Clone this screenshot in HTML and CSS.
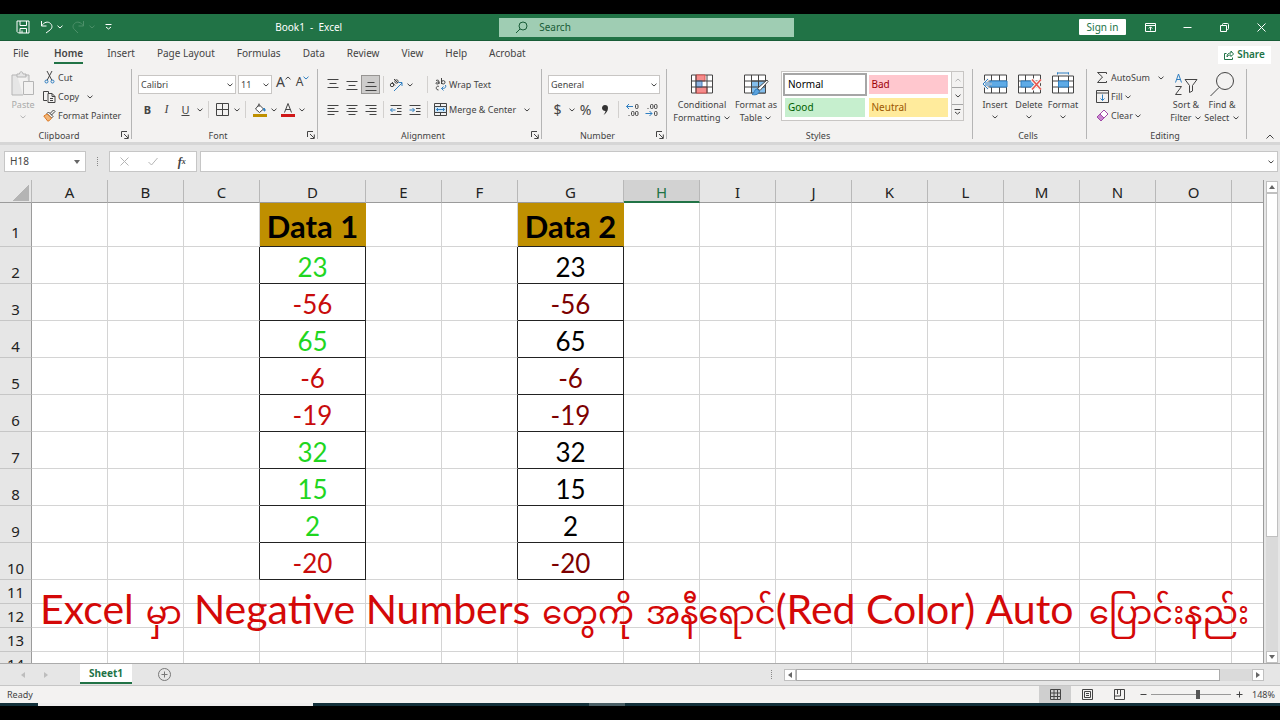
FILE: index.html
```html
<!DOCTYPE html>
<html lang="en">
<head>
    <meta charset="UTF-8">
    <meta name="viewport" content="width=device-width, initial-scale=1.0">
    <title>Book1 - Excel</title>
    <link rel="stylesheet" href="styles.css">
</head>
<body>
    <svg class="defs" aria-hidden="true">
        <symbol id="chev" viewBox="0 0 6 4"><path d="M.5.7 3 3 5.5.7"/></symbol>
        <symbol id="launch" viewBox="0 0 8 8"><path d="M.5 6V.5H6M3 3l4 4M7.3 3.5v4h-4"/></symbol>
    </svg>

    <header class="titlebar">
        <div class="title-left">
            <div class="quick">
                <button aria-label="Save"><svg width="14" height="14" viewBox="0 0 14 14"><path d="M1 1h12v12H2.5L1 11.500zM4 1v4.500h6.500V1M4 13V8.500h6.500V13M6 13v-2.500"/></svg></button>
                <button aria-label="Undo"><svg width="13" height="14" viewBox="0 0 13 14"><path d="M1.500 1v5h5M1.700 5.800C4 2 8 1 10.500 3.500s1.500 5-.5 6.500L6 13"/></svg></button>
                <button aria-label="Undo list"><svg class="chev"><use href="#chev"/></svg></button>
                <button class="faded" aria-label="Redo"><svg width="13" height="14" viewBox="0 0 13 14"><path d="M11.500 1v5h-5M11.300 5.800C9 2 5 1 2.500 3.500s-1.500 5 .5 6.500l3 3"/></svg></button>
                <button class="faded" aria-label="Redo list"><svg class="chev"><use href="#chev"/></svg></button>
                <button class="customize" aria-label="Customize toolbar"><svg width="7" height="6" viewBox="0 0 7 6"><path d="M.5.5h6M1 3l2.500 2L6 3"/></svg></button>
            </div>
            <span class="doc-title">Book1&nbsp; -&nbsp; Excel</span>
        </div>
        <label class="search">
            <svg width="13" height="13" viewBox="0 0 13 13"><circle cx="8" cy="5" r="4"/><path d="M5 8l-4 4"/></svg>
            <input type="text" placeholder="Search" aria-label="Search">
        </label>
        <div class="window-tools">
            <button class="signin">Sign in</button>
            <button class="wbtn" aria-label="Ribbon display"><svg width="11" height="9" viewBox="0 0 11 9"><path d="M.5.5h10v8H.5zM.5 2.500h10M5.500 7.500V4M3.800 5.500l1.700-1.700 1.700 1.700"/></svg></button>
            <button class="wbtn" aria-label="Minimize"><svg width="9" height="9" viewBox="0 0 9 9"><path d="M.5 4.500h8"/></svg></button>
            <button class="wbtn" aria-label="Restore"><svg width="9" height="9" viewBox="0 0 9 9"><path d="M.5 2.500h6v6h-6zM2.500 2.500v-1q0-1 1-1h4q1 0 1 1v4q0 1-1 1h-1"/></svg></button>
            <button class="wbtn" aria-label="Close"><svg width="9" height="9" viewBox="0 0 9 9"><path d="M.5.5l8 8M8.500.5l-8 8"/></svg></button>
        </div>
    </header>

    <nav class="tabs">
        <a href="#">File</a>
        <a href="#" class="active">Home</a>
        <a href="#">Insert</a>
        <a href="#">Page Layout</a>
        <a href="#">Formulas</a>
        <a href="#">Data</a>
        <a href="#">Review</a>
        <a href="#">View</a>
        <a href="#">Help</a>
        <a href="#">Acrobat</a>
        <button class="share"><svg width="10" height="10" viewBox="0 0 10 10"><path d="M2.500 3.500h-2v6h8v-2M3 7c0-3 1.500-4 4-4V1l2.500 3L7 6.500V5C5 5 4 5.500 3 7z"/></svg>Share</button>
    </nav>

    <section class="ribbon">
        <div class="group g-clipboard">
            <div class="tools">
                <button class="big faded">
                    <svg width="24" height="27" viewBox="0 0 24 27"><path d="M6 4H1v20h11M14 4h4v7M6 6V3h2.500C8.500 0 12 0 12 3h3v3z" fill="#e6e6e6"/><path d="M12.500 10.500h10v13h-10z" fill="#f3f2f1"/></svg>
                    <span>Paste</span>
                    <svg class="chev"><use href="#chev"/></svg>
                </button>
                <div class="stack">
                    <button><svg width="13" height="13" viewBox="0 0 13 13"><path d="M4 0l5 9.500M9 0L4 9.500"/><g stroke="#2f7fc1"><circle cx="3.500" cy="10.500" r="1.500"/><circle cx="9.500" cy="10.500" r="1.500"/></g></svg>Cut</button>
                    <button><svg width="13" height="13" viewBox="0 0 13 13"><path d="M4 10.500H.5V1.500h5V3M5 3.500h4l3 3v6H5zM9 3.500v3h3M7 8.500h3M7 10.500h3"/></svg>Copy<svg class="chev far"><use href="#chev"/></svg></button>
                    <button><svg width="13" height="13" viewBox="0 0 13 13"><path d="M7 4.500L10.500 1 12 2.500 8.500 6z"/><path d="M5.500 3l4.500 4.500-1.500 1.500L4 4.500z" fill="#fff"/><path d="M4 5L.8 7l4 5.200C7 11.500 8 10 8.500 9z" fill="#f2b577" stroke="#dd7a24"/></svg>Format Painter</button>
                </div>
            </div>
            <div class="caption"><span>Clipboard</span><button aria-label="Clipboard options"><svg class="launch"><use href="#launch"/></svg></button></div>
        </div>

        <div class="group g-font">
            <div class="rows">
                <div class="row">
                    <label class="combo combo-font"><select aria-label="Font"><option>Calibri</option></select><svg class="chev"><use href="#chev"/></svg></label>
                    <label class="combo combo-size"><select aria-label="Font size"><option>11</option></select><svg class="chev"><use href="#chev"/></svg></label>
                    <button class="ic fsize" aria-label="Increase font size"><span class="grow">A</span><svg class="chev up"><use href="#chev"/></svg></button>
                    <button class="ic fsize" aria-label="Decrease font size"><span>A</span><svg class="chev up blue"><use href="#chev"/></svg></button>
                </div>
                <div class="row">
                    <button class="ic bold">B</button>
                    <button class="ic italic">I</button>
                    <button class="ic under">U</button>
                    <button class="drop" aria-label="Underline style"><svg class="chev"><use href="#chev"/></svg></button>
                    <i class="sep"></i>
                    <button class="ic" aria-label="Borders"><svg width="13" height="13" viewBox="0 0 13 13"><path d="M.5.5h12v12H.5zM6.500.5v12M.5 6.500h12"/></svg></button>
                    <button class="drop" aria-label="Border style"><svg class="chev"><use href="#chev"/></svg></button>
                    <i class="sep"></i>
                    <button class="ic" aria-label="Fill color"><svg width="14" height="14" viewBox="0 0 14 14"><path d="M6 1.500l4.500 4.500L6.500 9.500 2.500 6z" fill="#fff"/><path d="M6 4V.5"/><path d="M11 5c1.500 1.500 1.500 3 .5 3S10.500 6.500 11 5z" fill="#2f7fc1" stroke="#2f7fc1"/><path d="M0 11h14v3H0z" fill="#bf9000" stroke="none"/></svg></button>
                    <button class="drop" aria-label="More fill colors"><svg class="chev"><use href="#chev"/></svg></button>
                    <button class="ic" aria-label="Font color"><svg width="14" height="14" viewBox="0 0 14 14"><path d="M3.500 9.500l3.500-9 3.500 9M4.600 6.500h4.800"/><path d="M0 11h14v3H0z" fill="#d01818" stroke="none"/></svg></button>
                    <button class="drop" aria-label="More font colors"><svg class="chev"><use href="#chev"/></svg></button>
                </div>
            </div>
            <div class="caption"><span>Font</span><button aria-label="Font options"><svg class="launch"><use href="#launch"/></svg></button></div>
        </div>

        <div class="group g-align">
            <div class="rows">
                <div class="row">
                    <button class="ic" aria-label="Top align"><svg width="12" height="12" viewBox="0 0 12 12"><path d="M.5.5h11M2.500 4.500h7M.5 8.500h11"/></svg></button>
                    <button class="ic" aria-label="Middle align"><svg width="12" height="12" viewBox="0 0 12 12"><path d="M.5 2.500h11M2.500 6.500h7M.5 10.500h11"/></svg></button>
                    <button class="ic pressed" aria-label="Bottom align"><svg width="12" height="12" viewBox="0 0 12 12"><path d="M2.500 3.500h7M.5 7.500h11M.5 11.500h11"/></svg></button>
                    <i class="sep"></i>
                    <button class="ic" aria-label="Orientation"><svg width="14" height="14" viewBox="0 0 14 14"><circle cx="3" cy="7" r="1.700"/><path d="M3 4l3 3.500M5 1l4 4"/><circle cx="7.500" cy="3.500" r="1.700"/><path d="M5 13l8-8M9.500 4.500H13V8" stroke="#2f7fc1"/></svg></button>
                    <button class="drop" aria-label="More orientations"><svg class="chev"><use href="#chev"/></svg></button>
                    <i class="sep second"></i>
                    <button class="wide"><svg width="13" height="13" viewBox="0 0 13 13"><path d="M2 2.500c3-1 3 0 3 3.500M5 4c-3-.5-4 2-2 2s2-1 2-2M7.500 0v6"/><circle cx="9.300" cy="4.300" r="1.700"/><path d="M5 8.500c-3-1.500-4 3.500-.5 3.500"/><path d="M11.500 7c1 3-1 3.500-4 3.500M9.500 8.500l-2 2 2 2" stroke="#2f7fc1"/></svg>Wrap Text</button>
                </div>
                <div class="row">
                    <button class="ic" aria-label="Align left"><svg width="12" height="12" viewBox="0 0 12 12"><path d="M.5 1.500h11M.5 4.500h7M.5 7.500h11M.5 10.500h7"/></svg></button>
                    <button class="ic" aria-label="Center"><svg width="12" height="12" viewBox="0 0 12 12"><path d="M.5 1.500h11M2.500 4.500h7M.5 7.500h11M2.500 10.500h7"/></svg></button>
                    <button class="ic" aria-label="Align right"><svg width="12" height="12" viewBox="0 0 12 12"><path d="M.5 1.500h11M4.500 4.500h7M.5 7.500h11M4.500 10.500h7"/></svg></button>
                    <i class="sep"></i>
                    <button class="ic" aria-label="Decrease indent"><svg width="12" height="12" viewBox="0 0 12 12"><path d="M.5 1.500h11M7 4.500h4.500M7 7.500h4.500M.5 10.500h11"/><path d="M5.500 6h-5M2.500 4l-2 2 2 2" stroke="#2f7fc1"/></svg></button>
                    <button class="ic" aria-label="Increase indent"><svg width="12" height="12" viewBox="0 0 12 12"><path d="M.5 1.500h11M7 4.500h4.500M7 7.500h4.500M.5 10.500h11"/><path d="M.5 6h5M3.500 4l2 2-2 2" stroke="#2f7fc1"/></svg></button>
                    <i class="sep"></i>
                    <button class="wide"><svg width="13" height="13" viewBox="0 0 13 13"><path d="M.5.5h12v12H.5zM6.500.5v3M6.500 10v2.500"/><path d="M.5 3.500h12v6H.5z" fill="#cfe6f7"/><path d="M2.500 6.500h8M4 5L2.500 6.500 4 8M9 5l1.500 1.500L9 8" stroke="#2f7fc1"/></svg>Merge &amp; Center<svg class="chev far"><use href="#chev"/></svg></button>
                </div>
            </div>
            <div class="caption"><span>Alignment</span><button aria-label="Alignment options"><svg class="launch"><use href="#launch"/></svg></button></div>
        </div>

        <div class="group g-number">
            <div class="rows">
                <div class="row">
                    <label class="combo combo-number"><select aria-label="Number format"><option>General</option></select><svg class="chev"><use href="#chev"/></svg></label>
                </div>
                <div class="row">
                    <button class="ic glyph">$</button>
                    <button class="drop" aria-label="Currency"><svg class="chev"><use href="#chev"/></svg></button>
                    <button class="ic glyph">%</button>
                    <button class="ic" aria-label="Comma style"><svg width="8" height="12" viewBox="0 0 8 12"><path d="M4 1c2 0 3 1 3 3 0 3-2 5.500-4.500 7 1-1.500 2-3 2-4C2 7 1 5.500 1 4s1-3 3-3z" fill="#333" stroke="none"/></svg></button>
                    <i class="sep"></i>
                    <button class="ic dec" aria-label="Increase decimal"><svg width="13" height="14" viewBox="0 0 13 14"><rect x="9.500" y="1.500" width="2.500" height="4" rx="1"/><rect x="9.500" y="8.500" width="2.500" height="4" rx="1"/><rect x="5.500" y="8.500" width="2.500" height="4" rx="1"/><path d="M3 12v1"/><path d="M7 3.500H.5M3 1L.5 3.500 3 6" stroke="#2f7fc1"/></svg></button>
                    <button class="ic dec" aria-label="Decrease decimal"><svg width="13" height="14" viewBox="0 0 13 14"><rect x="9.500" y="1.500" width="2.500" height="4" rx="1"/><rect x="5.500" y="1.500" width="2.500" height="4" rx="1"/><rect x="9.500" y="8.500" width="2.500" height="4" rx="1"/><path d="M3 5v1"/><path d="M.5 10.500H7M4.500 8L7 10.500 4.500 13" stroke="#2f7fc1"/></svg></button>
                </div>
            </div>
            <div class="caption"><span>Number</span><button aria-label="Number options"><svg class="launch"><use href="#launch"/></svg></button></div>
        </div>

        <div class="group g-styles">
            <div class="tools">
                <button class="big roomy">
                    <svg width="24" height="24" viewBox="0 0 24 24"><path d="M1.500 2.500h21v18h-21z" fill="#fff"/><path d="M6 2.500h9v6H6zM6 14.500h11v6H6z" fill="#f58c8c" stroke="#d9534f"/><path d="M6 8.500h6v6H6z" fill="#8fb4e3" stroke="#4a7ebb"/><path d="M1.500 8.500h21M1.500 14.500h21M6 2.500v18M17 2.500v18"/></svg>
                    <span>Conditional<br>Formatting <svg class="chev"><use href="#chev"/></svg></span>
                </button>
                <button class="big">
                    <svg width="26" height="24" viewBox="0 0 26 24"><path d="M1.500 2.500h21v18h-21z" fill="#fff"/><path d="M8.500 8.500h14v12h-14z" fill="#83beec"/><path d="M1.500 8.500h21M1.500 14.500h21M8.500 2.500v18M15.500 2.500v18"/><path d="M24 7.500L14.500 16l2.500 2L25 9z" fill="#fff"/><path d="M14 16.500c-3 0-2 4-5 5.500 4 1 7-.5 7.500-3.500z" fill="#5ba3dd" stroke="#2f7fc1"/></svg>
                    <span>Format as<br>Table <svg class="chev"><use href="#chev"/></svg></span>
                </button>
                <div class="gallery">
                    <div class="swatches">
                        <button class="swatch normal">Normal</button>
                        <button class="swatch bad">Bad</button>
                        <button class="swatch good">Good</button>
                        <button class="swatch neutral">Neutral</button>
                    </div>
                    <div class="spin">
                        <button class="faded" aria-label="Previous styles"><svg class="chev flip"><use href="#chev"/></svg></button>
                        <button aria-label="Next styles"><svg class="chev"><use href="#chev"/></svg></button>
                        <button aria-label="All styles"><svg width="7" height="6" viewBox="0 0 7 6"><path d="M.5.5h6M1 3l2.500 2L6 3"/></svg></button>
                    </div>
                </div>
            </div>
            <div class="caption"><span>Styles</span></div>
        </div>

        <div class="group g-cells">
            <div class="tools">
                <button class="big">
                    <svg width="26" height="24" viewBox="0 0 26 24"><path d="M2.500 2.500h22v18h-22zM2.500 8.500h22M2.500 14.500h22M9.500 2.500v18M17.500 2.500v18" fill="#fff"/><path d="M8 8.500h17v6H8z" fill="#5fabe6" stroke="#2f7fc1"/><path d="M10 11.500H2M6.500 6l-5.500 5.500L6.500 17" stroke="#f3f2f1" stroke-width="3"/><path d="M10 10.500H3M10 12.500H3M6 6.500l-5 5 5 5" stroke="#2f7fc1"/></svg>
                    <span>Insert</span><svg class="chev"><use href="#chev"/></svg>
                </button>
                <button class="big">
                    <svg width="26" height="24" viewBox="0 0 26 24"><path d="M2.500 2.500h22v18h-22zM2.500 8.500h22M2.500 14.500h22M9.500 2.500v18M17.500 2.500v18" fill="#fff"/><path d="M5 8.500h12v6H5z" fill="#5fabe6" stroke="#2f7fc1"/><path d="M16 7l9 10M25 7l-9 10" stroke="#f3f2f1" stroke-width="4"/><path d="M16 7l9 10M25 7l-9 10" stroke="#e8554e" stroke-width="1.500"/></svg>
                    <span>Delete</span><svg class="chev"><use href="#chev"/></svg>
                </button>
                <button class="big">
                    <svg width="26" height="24" viewBox="0 0 26 24"><path d="M2.500 3.500h21v17h-21zM2.500 8.500h21M2.500 14.500h21M8.500 3.500v17M18.500 3.500v17" fill="#fff"/><path d="M8.500 8.500h10v6h-10z" fill="#5fabe6" stroke="#2f7fc1"/><path d="M7 .5h12M7.500 0v2M18.500 0v2" stroke="#2f7fc1"/></svg>
                    <span>Format</span><svg class="chev"><use href="#chev"/></svg>
                </button>
            </div>
            <div class="caption"><span>Cells</span></div>
        </div>

        <div class="group g-editing">
            <div class="tools">
                <div class="stack">
                    <button><svg width="13" height="13" viewBox="0 0 13 13"><path d="M10.500 3V1.500H1.500L6.500 6l-5 5.500h9V10"/></svg>AutoSum<svg class="chev far"><use href="#chev"/></svg></button>
                    <button><svg width="13" height="13" viewBox="0 0 13 13"><path d="M.5.500h12v12H.5zM.5 3h12"/><path d="M6.500 4.500v6M4.500 8.500l2 2 2-2" stroke="#2f7fc1"/></svg>Fill<svg class="chev"><use href="#chev"/></svg></button>
                    <button><svg width="13" height="13" viewBox="0 0 13 13"><path d="M1 8l7-7 4 4-7 7z" fill="#fff" stroke="#a04aa8"/><path d="M1 8l3-3 4 4-3 3z" fill="#c986cf" stroke="#a04aa8"/></svg>Clear<svg class="chev"><use href="#chev"/></svg></button>
                </div>
                <button class="big">
                    <svg width="24" height="25" viewBox="0 0 24 25"><path d="M1.500 10.500L4.500 2l3 8.500M2.500 7.500h4" stroke="#2f7fc1"/><path d="M1.500 14.500h6l-6 8h6M11 7.500h12l-4.500 6v5.500l-3 1.500v-7z"/></svg>
                    <span>Sort &amp;<br>Filter <svg class="chev"><use href="#chev"/></svg></span>
                </button>
                <button class="big">
                    <svg width="24" height="25" viewBox="0 0 24 25"><circle cx="15" cy="9" r="8.500"/><path d="M9 15.500L.5 24"/></svg>
                    <span>Find &amp;<br>Select <svg class="chev"><use href="#chev"/></svg></span>
                </button>
            </div>
            <div class="caption"><span>Editing</span></div>
        </div>
        <button class="collapse" aria-label="Collapse ribbon"><svg width="8" height="5" viewBox="0 0 8 5"><path d="M.5 4.500L4 1l3.500 3.500"/></svg></button>
    </section>

    <section class="formula-bar">
        <label class="name-box"><input type="text" value="H18" aria-label="Name box"><svg width="6" height="4" viewBox="0 0 6 4"><path d="M0 0h6L3 4z"/></svg></label>
        <i class="grip"></i>
        <div class="fx">
            <button class="faded" aria-label="Cancel"><svg width="9" height="9" viewBox="0 0 9 9"><path d="M.5.5l8 8M8.500.5l-8 8"/></svg></button>
            <button class="faded" aria-label="Enter"><svg width="10" height="9" viewBox="0 0 10 9"><path d="M.5 5L3.500 8l6-7"/></svg></button>
            <button class="fn" aria-label="Insert function">f<sub>x</sub></button>
        </div>
        <label class="formula"><input type="text" aria-label="Formula"><svg class="chev"><use href="#chev"/></svg></label>
    </section>

    <main class="sheet">
        <div class="grid-area">
            <table class="grid">
                <colgroup id="cols"></colgroup>
                <thead><tr id="letters"></tr></thead>
                <tbody id="cells"></tbody>
            </table>
            <p class="banner" lang="my">
                <span>Excel</span>
                <span class="my">မှာ</span>
                <span>Negative Numbers</span>
                <span class="my">တွေကို</span>
                <span><span class="my">အနီရောင်</span>(Red Color) Auto</span>
                <span class="my">ပြောင်းနည်း</span>
            </p>
        </div>
        <div class="vscroll">
            <button aria-label="Scroll up"><svg width="6" height="4" viewBox="0 0 6 4"><path d="M0 4h6L3 0z"/></svg></button>
            <div class="vtrack"><div class="vthumb"></div></div>
            <button aria-label="Scroll down"><svg width="6" height="4" viewBox="0 0 6 4"><path d="M0 0h6L3 4z"/></svg></button>
        </div>
    </main>

    <div class="sheet-tabs">
        <div class="sheet-nav">
            <button aria-label="Previous sheet"><svg width="4" height="6" viewBox="0 0 4 6"><path d="M4 0v6L0 3z"/></svg></button>
            <button aria-label="Next sheet"><svg width="4" height="6" viewBox="0 0 4 6"><path d="M0 0v6l4-3z"/></svg></button>
        </div>
        <button class="sheet-tab">Sheet1</button>
        <button class="add" aria-label="New sheet"><svg width="13" height="13" viewBox="0 0 13 13"><circle cx="6.500" cy="6.500" r="6"/><path d="M6.500 3.500v6M3.500 6.500h6"/></svg></button>
        <i class="grip"></i>
        <div class="hscroll">
            <button aria-label="Scroll left"><svg width="4" height="6" viewBox="0 0 4 6"><path d="M4 0v6L0 3z"/></svg></button>
            <div class="htrack"><div class="hthumb"></div></div>
            <button aria-label="Scroll right"><svg width="4" height="6" viewBox="0 0 4 6"><path d="M0 0v6l4-3z"/></svg></button>
        </div>
    </div>

    <footer class="status">
        <span class="ready">Ready</span>
        <button class="view on" aria-label="Normal view"><svg width="11" height="11" viewBox="0 0 11 11"><path d="M.5.5h10v10H.5zM4 .5v10M7.500.5v10M.5 4h10M.5 7.500h10"/></svg></button>
        <button class="view" aria-label="Page layout view"><svg width="11" height="11" viewBox="0 0 11 11"><path d="M.5.5h10v10H.5zM2.500 2.500h6v6h-6zM4 4.500h3M4 6.500h3"/></svg></button>
        <button class="view" aria-label="Page break view"><svg width="11" height="11" viewBox="0 0 11 11"><path d="M.5.5h10v10H.5zM.5 7h6V.500M3.500.5V5"/></svg></button>
        <button class="step" aria-label="Zoom out"><svg width="7" height="7" viewBox="0 0 7 7"><path d="M.5 3.500h6"/></svg></button>
        <input class="zoom" type="range" min="0" max="100" value="59" aria-label="Zoom">
        <button class="step" aria-label="Zoom in"><svg width="7" height="7" viewBox="0 0 7 7"><path d="M.5 3.500h6M3.500.5v6"/></svg></button>
        <span class="percent">148%</span>
    </footer>
    <div class="taskbar"><div class="task"></div><div class="task dim"></div></div>

    <script src="script.js"></script>
</body>
</html>
```
FILE: styles.css
```css
* {
    box-sizing: border-box;
}
body {
    margin: 0;
    padding: 14px 0;
    height: 100vh;
    display: flex;
    flex-direction: column;
    overflow: hidden;
    background: #000;
    color: #444;
    font: 9px/13px "Noto Sans", "Open Sans", sans-serif;
}
button, input, select {
    font: inherit;
    color: inherit;
    border: 0;
    padding: 0;
    margin: 0;
    background: none;
    border-radius: 0;
}
button {
    display: flex;
    align-items: center;
    justify-content: center;
    white-space: nowrap;
}
svg {
    fill: none;
    stroke: #444;
    flex: none;
}
.defs {
    position: absolute;
    width: 0;
    height: 0;
}
.chev {
    width: 6px;
    height: 4px;
}
.launch {
    width: 8px;
    height: 8px;
}
.flip {
    transform: rotate(180deg);
}
.faded {
    color: #aaa;
}
.faded svg {
    stroke: #b5b5b5;
}

/* title bar */
.titlebar {
    display: flex;
    align-items: center;
    flex: none;
    height: 27px;
    background: #217346;
    border-bottom: 1px solid #185c37;
    color: #fff;
}
.titlebar svg {
    stroke: #fff;
}
.title-left {
    flex: 0 0 39%;
    display: flex;
    align-items: center;
}
.quick {
    display: flex;
    align-items: center;
    padding-left: 16px;
}
.quick button {
    margin-right: 4px;
}
.quick button:first-child {
    margin-right: 10px;
}
.quick button:nth-child(3) {
    margin-right: 9px;
}
.quick .faded svg {
    stroke: #4c9069;
}
.quick .customize {
    margin-left: 6px;
}
.doc-title {
    margin-left: auto;
    margin-right: 157px;
    font-size: 10px;
}
.search {
    flex: 0 0 23%;
    height: 19px;
    display: flex;
    align-items: center;
    padding-left: 16px;
    gap: 11px;
    background: #9fcdb3;
    color: #185c37;
}
.titlebar .search svg {
    stroke: #185c37;
}
.search input {
    flex: 1;
    min-width: 0;
    font-size: 10px;
}
.search input::placeholder {
    color: #185c37;
    opacity: 1;
}
.window-tools {
    flex: 1;
    display: flex;
    justify-content: flex-end;
    align-items: center;
}
.signin {
    width: 47px;
    height: 16px;
    margin-right: 6px;
    background: #fff;
    color: #217346;
    font-size: 10px;
    border-radius: 1px;
}
.wbtn {
    width: 37px;
    height: 26px;
}

/* ribbon tabs */
.tabs {
    display: flex;
    align-items: center;
    flex: none;
    height: 27px;
    gap: 22px;
    padding: 0 9px 0 13px;
    background: #f3f2f1;
    font-size: 10px;
}
.tabs a {
    color: #444;
    text-decoration: none;
    padding: 2px 0;
    border-bottom: 2px solid transparent;
}
.tabs a:first-child {
    margin-right: 3px;
}
.tabs .active {
    margin-right: 2px;
    font-weight: 600;
    border-color: #217346;
}
.share {
    margin-left: auto;
    width: 53px;
    height: 18px;
    gap: 3px;
    background: #fff;
    color: #217346;
    font-weight: 600;
}
.share svg {
    stroke: #217346;
}

/* ribbon */
.ribbon {
    display: flex;
    flex: none;
    height: 77px;
    padding-top: 1px;
    background: #f3f2f1;
    border-bottom: 3px solid #d6d6d6;
}
.group {
    display: flex;
    flex-direction: column;
    height: 70px;
    border-right: 1px solid #b5b5b5;
}
.tools, .rows {
    height: 60px;
    flex: none;
}
.tools {
    display: flex;
}
.caption {
    display: flex;
    align-items: center;
    height: 12px;
}
.caption span {
    flex: 1;
    text-align: center;
    padding-right: 3px;
}
.caption button {
    margin-right: 2px;
}
.big {
    flex-direction: column;
    justify-content: flex-start;
    padding-top: 2px;
}
.big > svg:first-child {
    height: 27px;
}
.big .chev {
    margin: 4px 0;
}
.big span .chev {
    margin: 1px;
}
.stack {
    display: flex;
    flex-direction: column;
    gap: 6px;
    padding-top: 2px;
}
.stack button {
    justify-content: flex-start;
    height: 13px;
    gap: 2px;
}
.far {
    margin-left: 6px;
}
.rows {
    display: flex;
    flex-direction: column;
    gap: 6px;
    padding-top: 6px;
}
.row {
    display: flex;
    align-items: center;
    height: 19px;
}
.ic {
    width: 19px;
    height: 19px;
}
.drop {
    width: 9px;
    height: 19px;
}
.sep {
    width: 1px;
    height: 17px;
    margin: 0 4px;
    background: #d2d0ce;
}
.combo {
    position: relative;
    height: 19px;
    margin-right: 2px;
}
.combo select {
    appearance: none;
    width: 100%;
    height: 100%;
    padding-left: 2px;
    background: #fff;
    border: 1px solid #c8c6c4;
}
.combo .chev {
    position: absolute;
    right: 3px;
    top: 8px;
}
.pressed {
    background: #cdcccb;
    border: 1px solid #979593;
}
.g-clipboard { width: 132px; }
.g-clipboard .big { width: 43px; padding-left: 3px; }
.g-font { width: 186px; }
.g-font .rows { padding-left: 6px; }
.combo-font { width: 98px; }
.combo-size { width: 34px; }
.fsize {
    font-size: 12px;
    align-items: flex-start;
}
.fsize .grow {
    font-size: 14px;
}
.fsize .up {
    margin-top: 1px;
    transform: rotate(180deg);
}
.fsize .blue {
    transform: none;
    stroke: #2f7fc1;
}
.bold {
    font-size: 11px;
    font-weight: bold;
}
.italic {
    font: italic 12px "Liberation Serif", serif;
}
.under {
    font-size: 11px;
    text-decoration: underline;
}
.g-align { width: 224px; }
.g-align .rows { padding-left: 5px; }
.g-align .sep { margin: 0 2px 0 3px; }
.g-align .second { margin-left: 13px; }
.wide {
    gap: 2px;
    margin-left: 4px;
}
.g-number { width: 125px; }
.g-number .rows { padding-left: 6px; }
.combo-number { width: 112px; }
.glyph {
    font-size: 14px;
}
.g-styles { width: 306px; }
.g-styles .big { width: 48px; }
.g-styles .roomy { width: 65px; padding-left: 5px; }
.gallery {
    flex: 1;
    display: flex;
    height: 50px;
    margin: 2px 8px 0 1px;
    border: 1px solid #c8c6c4;
    background: #fff;
}
.swatches {
    flex: 1;
    display: grid;
    grid-template-columns: 1fr 1fr;
    gap: 4px;
    padding: 3px;
}
.swatch {
    justify-content: flex-start;
    padding-left: 3px;
    font-size: 10px;
}
.normal {
    color: #000;
    outline: 2px solid #a6a6a6;
}
.bad {
    color: #9c0006;
    background: #ffc7ce;
}
.good {
    color: #006100;
    background: #c6efce;
}
.neutral {
    color: #9c5700;
    background: #ffeb9c;
}
.spin {
    width: 12px;
    display: flex;
    flex-direction: column;
    border-left: 1px solid #c8c6c4;
}
.spin button {
    flex: 1;
    background: #f3f2f1;
}
.spin button + button {
    border-top: 1px solid #a6a6a6;
}
.g-cells { width: 114px; }
.g-cells .tools { padding-left: 5px; }
.g-cells .big { width: 34px; }
.g-editing { width: 160px; }
.g-editing .tools { padding-left: 9px; }
.g-editing .stack { width: 72px; }
.g-editing .big { width: 36px; }
.collapse {
    margin-left: auto;
    align-self: flex-end;
    width: 20px;
    height: 12px;
}

/* formula bar */
.formula-bar {
    display: flex;
    align-items: center;
    flex: none;
    height: 35px;
    padding: 0 2px 2px 4px;
    background: #e6e6e6;
}
.name-box, .fx, .formula {
    display: flex;
    align-items: center;
    height: 21px;
    background: #fff;
    border: 1px solid #c6c6c6;
}
.name-box {
    width: 82px;
    padding: 0 5px;
}
.name-box input, .formula input {
    flex: 1;
    min-width: 0;
}
.name-box input {
    font-size: 10px;
}
.name-box svg, .vscroll svg, .hscroll svg {
    fill: #666;
    stroke: none;
}
.grip {
    height: 9px;
    margin: 0 11px;
    border-left: 1px dotted #888;
}
.fx {
    width: 88px;
    margin-right: 3px;
}
.fx button {
    flex: 1;
}
.fx .fn {
    font: italic bold 12px/14px "Liberation Serif", serif;
}
.fx sub {
    font-size: 8px;
}
.formula {
    flex: 1;
    padding-right: 3px;
}

/* worksheet */
.sheet {
    flex: 1;
    min-height: 0;
    display: flex;
    background: #e6e6e6;
}
.grid-area {
    position: relative;
    flex: 1;
    overflow: hidden;
    border-right: 1px solid #9b9b9b;
}
.grid {
    width: 100%;
    table-layout: fixed;
    border-spacing: 0;
    background: #fff;
}
.grid .col-head { width: 32px; }
.grid .col { width: 76px; }
.grid .col-data { width: 106px; }
.grid th, .grid td {
    padding: 0;
    border-right: 1px solid #d4d4d4;
    border-bottom: 1px solid #d4d4d4;
}
.grid th {
    background: #e6e6e6;
    color: #222;
    font-size: 15px;
    font-weight: normal;
    line-height: 18px;
}
.grid thead th {
    height: 23px;
    padding-top: 2px;
    border-right-color: #b8b8b8;
    border-bottom-color: #9b9b9b;
}
.grid thead .corner {
    background: linear-gradient(135deg, transparent 50%, #b4b4b4 50%) 12px 4px / 17px 17px no-repeat #e6e6e6;
}
.grid thead .selected {
    background: #d2d2d2;
    color: #217346;
    border-bottom: 2px solid #217346;
}
.grid tbody th {
    height: 24px;
    padding-bottom: 2px;
    vertical-align: bottom;
    border-right-color: #9b9b9b;
    border-bottom-color: #c6c6c6;
}
.grid .tall th { height: 37px; }
.grid .first th {
    height: 44px;
    padding-bottom: 5px;
}
.grid td {
    padding-top: 3px;
    font: 26px/30px Lato, "Open Sans", sans-serif;
    text-align: center;
}
.grid tbody tr:nth-child(n + 11) td {
    padding: 0;
}
.grid tr > :last-child {
    border-right: 0;
}
.grid .filled {
    border-color: #222;
}
.grid .edge {
    border-right-color: #222;
}
.grid .title {
    background: #bf8f00;
    border-right-color: #bf8f00;
    color: #000;
    font-size: 31px;
    font-weight: bold;
    white-space: nowrap;
}
.pos { color: #1fd61f; }
.neg { color: #c80c0c; }
.plain { color: #000; }
.dark { color: #7c0000; }
.banner {
    position: absolute;
    left: 40px;
    right: 14px;
    bottom: 24px;
    margin: 0;
    display: flex;
    align-items: baseline;
    gap: 12px;
    color: #d40808;
    font: 41px/60px Lato, "Open Sans", sans-serif;
    white-space: nowrap;
}
.my {
    font-family: "Noto Sans Myanmar", "Myanmar Text", Padauk, sans-serif;
    font-size: 32px;
    line-height: 1;
}
.banner .my:last-child {
    margin-left: auto;
}
.banner span .my:last-child {
    margin-left: 0;
}

/* scrollbars */
.vscroll {
    width: 16px;
    display: flex;
    flex-direction: column;
    padding: 1px 2px 0;
}
.vscroll button {
    height: 12px;
    background: #fff;
    border: 1px solid #c0c0c0;
}
.vtrack {
    flex: 1;
    background: #dadada;
}
.vthumb {
    height: 75%;
    background: #fff;
    border: 1px solid #c0c0c0;
}
.sheet-tabs {
    display: flex;
    align-items: center;
    flex: none;
    height: 23px;
    padding-right: 16px;
    background: #e6e6e6;
    border-top: 1px solid #ababab;
    border-bottom: 1px solid #c6c6c6;
}
.sheet-nav {
    display: flex;
    gap: 19px;
    width: 80px;
    padding-left: 21px;
}
.sheet-nav svg {
    fill: #bdbdbd;
    stroke: none;
}
.sheet-tab {
    align-self: flex-start;
    width: 52px;
    height: 20px;
    background: #fff;
    color: #217346;
    border-bottom: 2px solid #217346;
    font-size: 10px;
    font-weight: bold;
}
.add {
    margin-left: 26px;
}
.add svg {
    stroke: #777;
}
.sheet-tabs .grip {
    margin-left: auto;
    margin-right: 12px;
}
.hscroll {
    display: flex;
    width: 38%;
    height: 12px;
}
.hscroll button {
    width: 12px;
    background: #fff;
    border: 1px solid #c0c0c0;
}
.htrack {
    flex: 1;
    background: #dadada;
}
.hthumb {
    width: 93%;
    height: 100%;
    background: #fff;
    border: 1px solid #ababab;
}

/* status bar */
.status {
    display: flex;
    align-items: center;
    flex: none;
    height: 17px;
    padding-right: 5px;
    background: #f3f2f1;
}
.ready {
    margin: 0 auto 0 7px;
}
.view {
    width: 32px;
    height: 17px;
}
.on {
    background: #cfcfcf;
}
.step {
    width: 16px;
    height: 17px;
}
.zoom {
    appearance: none;
    width: 80px;
    height: 9px;
    background: linear-gradient(#999, #999) center / 100% 1px no-repeat;
}
.zoom::-webkit-slider-thumb {
    appearance: none;
    width: 4px;
    height: 9px;
    background: #555;
}
.percent {
    width: 28px;
    text-align: right;
}
.taskbar {
    display: flex;
    flex: none;
    height: 3px;
    padding-left: 3%;
    gap: 276px;
    background: #12303a;
}
.task {
    width: 275px;
    background: #eee;
}
.dim {
    width: 36px;
    background: #4a5f66;
}
```
FILE: script.js
```js
const letters = 'ABCDEFGHIJKLMNO'.split('');
const values = [23, -56, 65, -6, -19, 32, 15, 2, -20];
const titles = { D: 'Data 1', G: 'Data 2' };

let cols = '<col class="col-head">';
let head = '<th class="corner"></th>';
letters.forEach((l) => {
    cols += `<col class="${titles[l] ? 'col-data' : 'col'}">`;
    head += `<th class="${l === 'H' ? 'selected' : ''}">${l}</th>`;
});
document.getElementById('cols').innerHTML = cols + '<col>';
document.getElementById('letters').innerHTML = head + '<th></th>';

let body = '';
for (let r = 1; r <= 14; r++) {
    body += `<tr class="${r === 1 ? 'first' : r <= 10 ? 'tall' : ''}"><th>${r}</th>`;
    letters.forEach((l) => {
        if (titles[l] && r === 1) {
            body += `<td class="filled title">${titles[l]}</td>`;
        } else if (titles[l] && r <= 10) {
            const v = values[r - 2];
            const color = l === 'D' ? (v < 0 ? 'neg' : 'pos') : (v < 0 ? 'dark' : 'plain');
            body += `<td class="filled ${color}">${v}</td>`;
        } else {
            const edge = (l === 'C' || l === 'F') && r > 1 && r <= 10;
            body += `<td class="${edge ? 'edge' : ''}"></td>`;
        }
    });
    body += '<td></td></tr>';
}
document.getElementById('cells').innerHTML = body;
```
